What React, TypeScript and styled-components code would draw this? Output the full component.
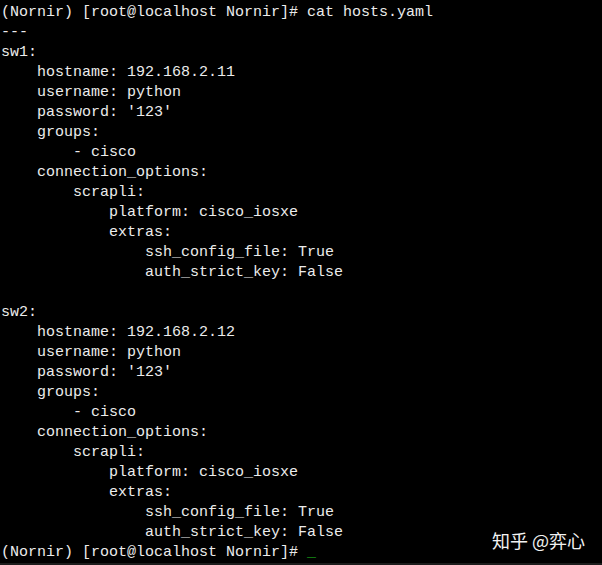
import React from "react";
import styled, { createGlobalStyle } from "styled-components";

const Global = createGlobalStyle`
  html, body { margin: 0; padding: 0; background: #000; }
  #root { width: 602px; height: 565px; overflow: hidden; }
`;

const Screen = styled.div`
  position: relative;
  width: 602px;
  height: 565px;
  background: #000;
  display: flex;
  flex-direction: column;
`;

const Terminal = styled.div`
  flex: 1;
  padding: 3px 0 0 1px;
  display: flex;
  flex-direction: column;
  font-family: "Liberation Mono", "DejaVu Sans Mono", monospace;
  font-size: 15px;
  line-height: 20px;
  color: #ececec;
`;

const Line = styled.div<{ $indent: number }>`
  height: 20px;
  flex: none;
  white-space: pre;
  padding-left: ${(p) => p.$indent * 9}px;
`;

const Cursor = styled.span`
  color: #1fc01f;
`;

const BottomBar = styled.div`
  height: 4px;
  flex: none;
  background: #1c1c1c;
`;

const Watermark = styled.div`
  position: absolute;
  left: 492px;
  top: 528px;
  font-family: "Noto Sans CJK SC", "Noto Sans", sans-serif;
  font-size: 18px;
  line-height: 24px;
  color: #f2f2f2;
  white-space: pre;
`;

const PROMPT = "(Nornir) [root@localhost Nornir]# ";

const host = (name: string, ip: string): [number, string][] => [
  [0, `${name}:`],
  [4, `hostname: ${ip}`],
  [4, "username: python"],
  [4, "password: '123'"],
  [4, "groups:"],
  [8, "- cisco"],
  [4, "connection_options:"],
  [8, "scrapli:"],
  [12, "platform: cisco_iosxe"],
  [12, "extras:"],
  [16, "ssh_config_file: True"],
  [16, "auth_strict_key: False"],
];

const lines: [number, string][] = [
  [0, PROMPT + "cat hosts.yaml"],
  [0, "---"],
  ...host("sw1", "192.168.2.11"),
  [0, ""],
  ...host("sw2", "192.168.2.12"),
];

export default function App() {
  return (
    <>
      <Global />
      <Screen>
        <Terminal>
          {lines.map(([indent, text], i) => (
            <Line key={i} $indent={indent}>
              {text}
            </Line>
          ))}
          <Line $indent={0}>
            {PROMPT}
            <Cursor>_</Cursor>
          </Line>
        </Terminal>
        <BottomBar />
        <Watermark>知乎 @弈心</Watermark>
      </Screen>
    </>
  );
}
